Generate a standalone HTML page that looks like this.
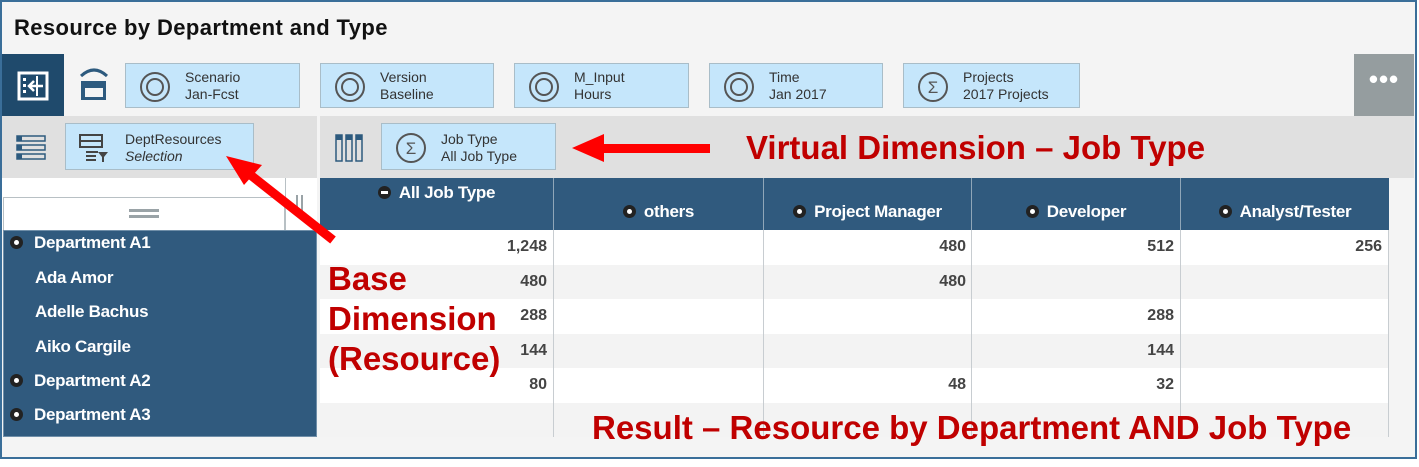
<!DOCTYPE html>
<html><head><meta charset="utf-8"><style>
*{margin:0;padding:0;box-sizing:border-box}
body{width:1419px;height:467px;background:#fff;font-family:"Liberation Sans",Arial,sans-serif;position:relative;overflow:hidden}
.a{position:absolute}
.frame{left:0;top:0;width:1417px;height:459px;border:2px solid #3a6e99;background:#f4f4f4}
.chip{position:absolute;top:63px;height:45px;background:#c5e6fb;border:1px solid #a9bdc8;font-size:14px;color:#333;line-height:17px}
.chip .t{position:absolute;left:59px;top:5px}
.chip .ic{position:absolute;left:12px;top:7px}
.hd{position:absolute;top:178px;height:52px;background:#305a7e;color:#fff;font-weight:bold;font-size:17px;border-right:1px solid #8fa6b8;letter-spacing:-0.3px}
.dot{display:inline-block;width:13px;height:13px;border-radius:50%;background:#222;vertical-align:-1px;margin-right:8px;position:relative}
.dot:after{content:"";position:absolute;left:4px;top:4px;width:5px;height:5px;border-radius:50%;background:#fff}
.dot.m:after{left:3px;top:5px;width:7px;height:3px;border-radius:0}
.row{position:absolute;left:320px;width:1068px;height:34.5px}
.num{position:absolute;font-size:16px;color:#444;font-weight:bold;text-align:right}
.lr{position:absolute;left:10px;color:#fff;font-weight:bold;font-size:17px;letter-spacing:-0.3px}
.red{position:absolute;color:#c00000;font-weight:bold;font-size:33px}
.vl{position:absolute;top:230px;height:207px;width:1px;background:#c8cdd1}
</style></head><body>
<div class="a frame"></div>
<div class="a" style="left:14px;top:15px;font-size:22px;font-weight:bold;color:#111;letter-spacing:0.4px">Resource by Department and Type</div>

<div class="a" style="left:2px;top:54px;width:62px;height:62px;background:#1f4a6c"></div>
<svg class="a" style="left:17px;top:71px" width="32" height="30" viewBox="0 0 32 30"><rect x="2" y="2" width="28" height="26" fill="none" stroke="#fff" stroke-width="3"/><rect x="6" y="7" width="3" height="3" fill="#fff"/><rect x="6" y="13" width="3" height="3" fill="#fff"/><rect x="6" y="19" width="3" height="3" fill="#fff"/><line x1="20" y1="5" x2="20" y2="25" stroke="#fff" stroke-width="2"/><path d="M26 15H13M17 10l-5 5 5 5" fill="none" stroke="#fff" stroke-width="2.5"/></svg>
<svg class="a" style="left:78px;top:66px" width="32" height="36" viewBox="0 0 32 36"><path d="M3 10Q16 -2 29 10" fill="none" stroke="#2d5a7e" stroke-width="3"/><rect x="3" y="15" width="25" height="19" fill="#2d5a7e"/><rect x="7" y="22" width="18" height="9" fill="#f4f4f4"/></svg>

<div class="chip" style="left:125px;width:175px"><svg class="ic" width="34" height="32"><circle cx="17" cy="16" r="14" fill="none" stroke="#555" stroke-width="2"/><circle cx="17" cy="16" r="8" fill="none" stroke="#555" stroke-width="2"/></svg><div class="t">Scenario<br>Jan-Fcst</div></div>
<div class="chip" style="left:320px;width:174px"><svg class="ic" width="34" height="32"><circle cx="17" cy="16" r="14" fill="none" stroke="#555" stroke-width="2"/><circle cx="17" cy="16" r="8" fill="none" stroke="#555" stroke-width="2"/></svg><div class="t">Version<br>Baseline</div></div>
<div class="chip" style="left:514px;width:175px"><svg class="ic" width="34" height="32"><circle cx="17" cy="16" r="14" fill="none" stroke="#555" stroke-width="2"/><circle cx="17" cy="16" r="8" fill="none" stroke="#555" stroke-width="2"/></svg><div class="t">M_Input<br>Hours</div></div>
<div class="chip" style="left:709px;width:174px"><svg class="ic" width="34" height="32"><circle cx="17" cy="16" r="14" fill="none" stroke="#555" stroke-width="2"/><circle cx="17" cy="16" r="8" fill="none" stroke="#555" stroke-width="2"/></svg><div class="t">Time<br>Jan 2017</div></div>
<div class="chip" style="left:903px;width:177px"><svg class="ic" width="34" height="32"><circle cx="17" cy="16" r="14" fill="none" stroke="#555" stroke-width="2"/><text x="17" y="22" text-anchor="middle" font-size="17" fill="#555" font-family="Liberation Sans">Σ</text></svg><div class="t">Projects<br>2017 Projects</div></div>
<div class="a" style="left:1354px;top:54px;width:60px;height:62px;background:#959d9f;color:#fff;font-size:26px;text-align:center;line-height:50px;font-weight:bold;letter-spacing:1px">•••</div>

<div class="a" style="left:2px;top:116px;width:1412px;height:62px;background:#e0e0e0"></div>
<div class="a" style="left:317px;top:116px;width:3px;height:62px;background:#f4f4f4"></div>
<svg class="a" style="left:16px;top:134px" width="32" height="28"><g fill="none" stroke="#2d5a7e" stroke-width="1.5"><rect x="1" y="2" width="28" height="5"/><rect x="1" y="11" width="28" height="5"/><rect x="1" y="20" width="28" height="5"/></g><rect x="1" y="2" width="5" height="5" fill="#2d5a7e"/><rect x="1" y="11" width="5" height="5" fill="#2d5a7e"/><rect x="1" y="20" width="5" height="5" fill="#2d5a7e"/></svg>
<div class="chip" style="left:65px;top:123px;width:189px;height:47px"><svg class="ic" style="left:12px;top:8px" width="34" height="32"><rect x="2" y="3" width="22" height="12" fill="none" stroke="#444" stroke-width="2"/><line x1="2" y1="9" x2="24" y2="9" stroke="#444" stroke-width="2"/><path d="M8 20h12M8 24h10M8 28h10" stroke="#444" stroke-width="2"/><path d="M20 20h10l-4 5v5h-2v-5z" fill="#444"/></svg><div class="t" style="left:59px;top:7px">DeptResources<br><i>Selection</i></div></div>
<svg class="a" style="left:334px;top:133px" width="30" height="30"><g fill="none" stroke="#2d5a7e" stroke-width="1.5"><rect x="2" y="2" width="6" height="26"/><rect x="12" y="2" width="6" height="26"/><rect x="22" y="2" width="6" height="26"/></g><rect x="2" y="2" width="6" height="5" fill="#2d5a7e"/><rect x="12" y="2" width="6" height="5" fill="#2d5a7e"/><rect x="22" y="2" width="6" height="5" fill="#2d5a7e"/></svg>
<div class="chip" style="left:381px;top:123px;width:175px;height:47px"><svg class="ic" style="left:13px;top:8px" width="34" height="32"><circle cx="16" cy="16" r="14" fill="none" stroke="#555" stroke-width="2"/><text x="16" y="22" text-anchor="middle" font-size="17" fill="#555" font-family="Liberation Sans">Σ</text></svg><div class="t" style="left:59px;top:7px">Job Type<br>All Job Type</div></div>

<div class="a" style="left:2px;top:178px;width:315px;height:52px;background:#fff"></div>
<div class="a" style="left:3px;top:197px;width:282px;height:33px;border:1px solid #b8c0c4;border-bottom:none;background:#fff"></div>
<div class="a" style="left:129px;top:209px;width:30px;height:3px;background:#9aa3a7"></div>
<div class="a" style="left:129px;top:215px;width:30px;height:3px;background:#9aa3a7"></div>
<div class="a" style="left:285px;top:178px;width:32px;height:52px;border-left:1px solid #b8c0c4"></div>
<div class="a" style="left:296px;top:195px;width:2px;height:18px;background:#9aa3a7"></div>
<div class="a" style="left:301px;top:195px;width:2px;height:18px;background:#9aa3a7"></div>
<div class="a" style="left:3px;top:230px;width:314px;height:207px;background:#305a7e;border:1px solid #6f8ea8"></div>
<div class="lr" style="top:233px"><span class="dot" style="margin-right:11px"></span>Department A1</div>
<div class="lr" style="left:35px;top:268px">Ada Amor</div>
<div class="lr" style="left:35px;top:302px">Adelle Bachus</div>
<div class="lr" style="left:35px;top:337px">Aiko Cargile</div>
<div class="lr" style="top:371px"><span class="dot" style="margin-right:11px"></span>Department A2</div>
<div class="lr" style="top:405px"><span class="dot" style="margin-right:11px"></span>Department A3</div>

<div class="hd" style="left:320px;width:234px;text-align:center;padding-top:5px"><span class="dot m"></span>All Job Type</div>
<div class="hd" style="left:554px;width:210px;text-align:center;padding-top:24px"><span class="dot"></span>others</div>
<div class="hd" style="left:764px;width:208px;text-align:center;padding-top:24px"><span class="dot"></span>Project Manager</div>
<div class="hd" style="left:972px;width:209px;text-align:center;padding-top:24px"><span class="dot"></span>Developer</div>
<div class="hd" style="left:1181px;width:208px;text-align:center;padding-top:24px;border-right:none"><span class="dot"></span>Analyst/Tester</div>

<div class="row" style="top:230px;background:#fff"></div>
<div class="row" style="top:264.5px;background:#f3f3f3"></div>
<div class="row" style="top:299px;background:#fff"></div>
<div class="row" style="top:333.5px;background:#f3f3f3"></div>
<div class="row" style="top:368px;background:#fff"></div>
<div class="row" style="top:402.5px;background:#f3f3f3"></div>
<div class="vl" style="left:553px"></div><div class="vl" style="left:763px"></div><div class="vl" style="left:971px"></div><div class="vl" style="left:1180px"></div><div class="vl" style="left:1388px"></div>

<div class="num" style="left:440px;width:107px;top:238px">1,248</div>
<div class="num" style="left:440px;width:107px;top:273px">480</div>
<div class="num" style="left:440px;width:107px;top:307px">288</div>
<div class="num" style="left:440px;width:107px;top:342px">144</div>
<div class="num" style="left:440px;width:107px;top:376px">80</div>
<div class="num" style="left:860px;width:106px;top:238px">480</div>
<div class="num" style="left:860px;width:106px;top:273px">480</div>
<div class="num" style="left:860px;width:106px;top:376px">48</div>
<div class="num" style="left:1070px;width:104px;top:238px">512</div>
<div class="num" style="left:1070px;width:104px;top:307px">288</div>
<div class="num" style="left:1070px;width:104px;top:342px">144</div>
<div class="num" style="left:1070px;width:104px;top:376px">32</div>
<div class="num" style="left:1280px;width:102px;top:238px">256</div>

<svg class="a" style="left:0;top:0" width="1419" height="467"><line x1="333" y1="240" x2="248" y2="173" stroke="#f00" stroke-width="9"/><polygon points="226,156 262,165 244,185" fill="#f00"/><rect x="600" y="144" width="110" height="9" fill="#f00"/><polygon points="572,148 604,134 604,162" fill="#f00"/></svg>
<div class="red" style="left:746px;top:129px">Virtual Dimension – Job Type</div>
<div class="red" style="left:328px;top:259px;line-height:40px">Base<br>Dimension<br>(Resource)</div>
<div class="red" style="left:592px;top:409px">Result – Resource by Department AND Job Type</div>
</body></html>
